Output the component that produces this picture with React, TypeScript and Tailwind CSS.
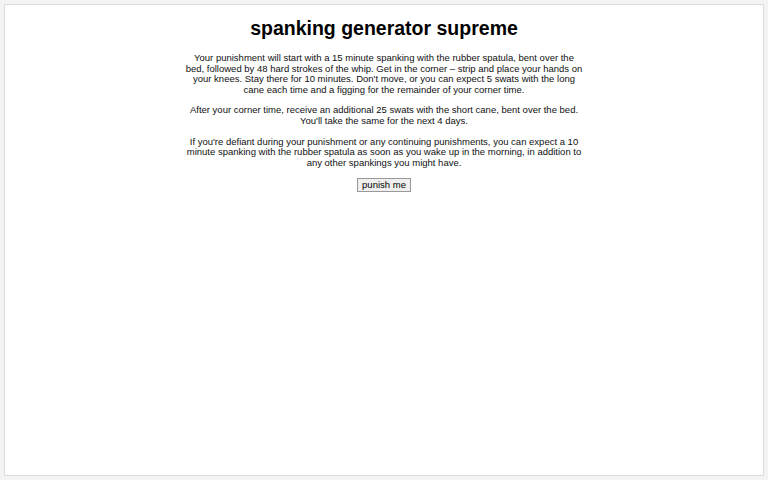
import React from 'react';

const paragraphs = [
  "Your punishment will start with a 15 minute spanking with the rubber spatula, bent over the bed, followed by 48 hard strokes of the whip. Get in the corner \u2013 strip and place your hands on your knees. Stay there for 10 minutes. Don't move, or you can expect 5 swats with the long cane each time and a figging for the remainder of your corner time.",
  "After your corner time, receive an additional 25 swats with the short cane, bent over the bed. You'll take the same for the next 4 days.",
  "If you're defiant during your punishment or any continuing punishments, you can expect a 10 minute spanking with the rubber spatula as soon as you wake up in the morning, in addition to any other spankings you might have.",
];

export default function App() {
  return (
    <div
      className="h-screen bg-[#f3f3f3] p-[4px] text-black"
      style={{ fontFamily: '"Liberation Sans", Arial, sans-serif' }}
    >
      <div className="h-full bg-white border border-[#dcdcdc] flex flex-col items-center">
        <h1 className="mt-[11px] text-[19.5px] font-bold leading-[24px]">spanking generator supreme</h1>
        <div className="mt-[13px] w-[399px] text-center text-[9.5px] leading-[10.6px] text-[#111]">
          {paragraphs.map((p, i) => (
            <p key={i} className="mb-[10px]">{p}</p>
          ))}
        </div>
        <button className="mt-[0px] h-[14px] px-[4px] text-[9.5px] leading-[12px] bg-[#efefef] border border-[#9a9a9a] text-black">
          punish me
        </button>
      </div>
    </div>
  );
}
